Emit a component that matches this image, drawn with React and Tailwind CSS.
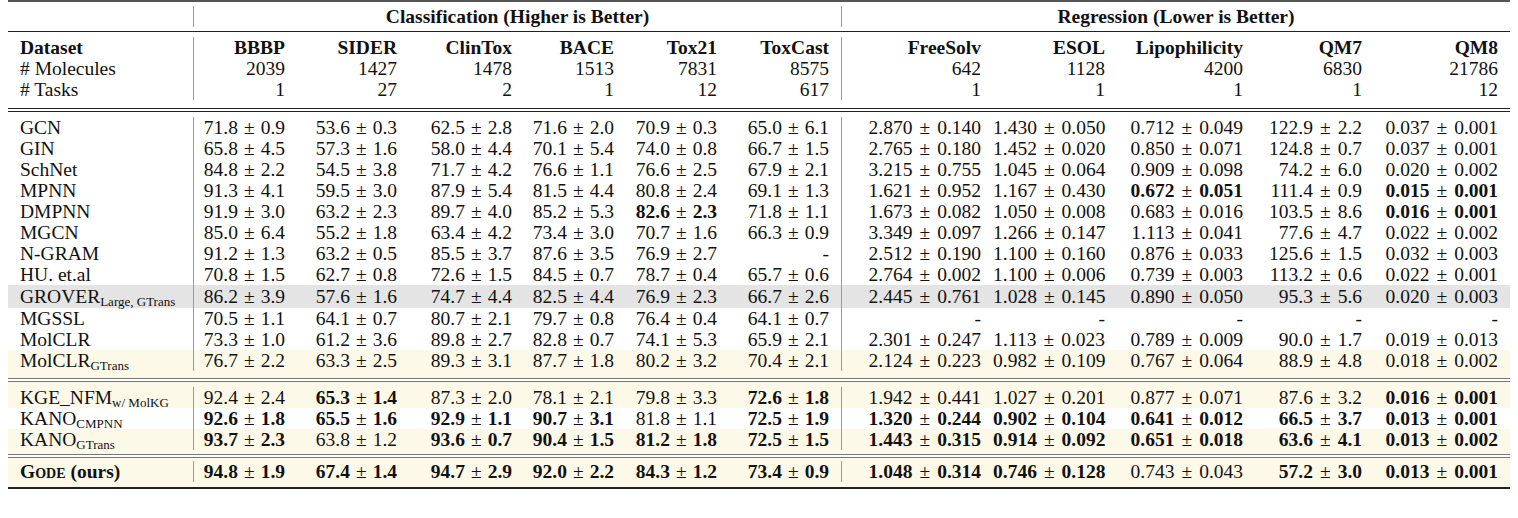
import React from 'react';

const grid = 'grid grid-cols-[185px_104px_112px_115px_102px_103px_112px_152px_124px_138px_119px_136px]';

const rows = [
  { name: 'GCN', c: ['71.8 ± 0.9', '53.6 ± 0.3', '62.5 ± 2.8', '71.6 ± 2.0', '70.9 ± 0.3', '65.0 ± 6.1'], r: ['2.870 ± 0.140', '1.430 ± 0.050', '0.712 ± 0.049', '122.9 ± 2.2', '0.037 ± 0.001'] },
  { name: 'GIN', c: ['65.8 ± 4.5', '57.3 ± 1.6', '58.0 ± 4.4', '70.1 ± 5.4', '74.0 ± 0.8', '66.7 ± 1.5'], r: ['2.765 ± 0.180', '1.452 ± 0.020', '0.850 ± 0.071', '124.8 ± 0.7', '0.037 ± 0.001'] },
  { name: 'SchNet', c: ['84.8 ± 2.2', '54.5 ± 3.8', '71.7 ± 4.2', '76.6 ± 1.1', '76.6 ± 2.5', '67.9 ± 2.1'], r: ['3.215 ± 0.755', '1.045 ± 0.064', '0.909 ± 0.098', '74.2 ± 6.0', '0.020 ± 0.002'] },
  { name: 'MPNN', c: ['91.3 ± 4.1', '59.5 ± 3.0', '87.9 ± 5.4', '81.5 ± 4.4', '80.8 ± 2.4', '69.1 ± 1.3'], r: ['1.621 ± 0.952', '1.167 ± 0.430', '*0.672 ± 0.051', '111.4 ± 0.9', '*0.015 ± 0.001'] },
  { name: 'DMPNN', c: ['91.9 ± 3.0', '63.2 ± 2.3', '89.7 ± 4.0', '85.2 ± 5.3', '*82.6 ± 2.3', '71.8 ± 1.1'], r: ['1.673 ± 0.082', '1.050 ± 0.008', '0.683 ± 0.016', '103.5 ± 8.6', '*0.016 ± 0.001'] },
  { name: 'MGCN', c: ['85.0 ± 6.4', '55.2 ± 1.8', '63.4 ± 4.2', '73.4 ± 3.0', '70.7 ± 1.6', '66.3 ± 0.9'], r: ['3.349 ± 0.097', '1.266 ± 0.147', '1.113 ± 0.041', '77.6 ± 4.7', '0.022 ± 0.002'] },
  { name: 'N-GRAM', c: ['91.2 ± 1.3', '63.2 ± 0.5', '85.5 ± 3.7', '87.6 ± 3.5', '76.9 ± 2.7', '-'], r: ['2.512 ± 0.190', '1.100 ± 0.160', '0.876 ± 0.033', '125.6 ± 1.5', '0.032 ± 0.003'] },
  { name: 'HU. et.al', c: ['70.8 ± 1.5', '62.7 ± 0.8', '72.6 ± 1.5', '84.5 ± 0.7', '78.7 ± 0.4', '65.7 ± 0.6'], r: ['2.764 ± 0.002', '1.100 ± 0.006', '0.739 ± 0.003', '113.2 ± 0.6', '0.022 ± 0.001'] },
  { name: 'GROVER', sub: 'Large, GTrans', tall: true, bg: 'bg-[#e4e4e4]', c: ['86.2 ± 3.9', '57.6 ± 1.6', '74.7 ± 4.4', '82.5 ± 4.4', '76.9 ± 2.3', '66.7 ± 2.6'], r: ['2.445 ± 0.761', '1.028 ± 0.145', '0.890 ± 0.050', '95.3 ± 5.6', '0.020 ± 0.003'] },
  { name: 'MGSSL', c: ['70.5 ± 1.1', '64.1 ± 0.7', '80.7 ± 2.1', '79.7 ± 0.8', '76.4 ± 0.4', '64.1 ± 0.7'], r: ['-', '-', '-', '-', '-'] },
  { name: 'MolCLR', c: ['73.3 ± 1.0', '61.2 ± 3.6', '89.8 ± 2.7', '82.8 ± 0.7', '74.1 ± 5.3', '65.9 ± 2.1'], r: ['2.301 ± 0.247', '1.113 ± 0.023', '0.789 ± 0.009', '90.0 ± 1.7', '0.019 ± 0.013'] },
  { name: 'MolCLR', sub: 'GTrans', bg: 'bg-[#fdf9e9]', c: ['76.7 ± 2.2', '63.3 ± 2.5', '89.3 ± 3.1', '87.7 ± 1.8', '80.2 ± 3.2', '70.4 ± 2.1'], r: ['2.124 ± 0.223', '0.982 ± 0.109', '0.767 ± 0.064', '88.9 ± 4.8', '0.018 ± 0.002'] },
];

const kgRows = [
  { name: 'KGE_NFM', sub: 'w/ MolKG', bg: 'bg-[#fdf9e9]', c: ['92.4 ± 2.4', '*65.3 ± 1.4', '87.3 ± 2.0', '78.1 ± 2.1', '79.8 ± 3.3', '*72.6 ± 1.8'], r: ['1.942 ± 0.441', '1.027 ± 0.201', '0.877 ± 0.071', '87.6 ± 3.2', '*0.016 ± 0.001'] },
  { name: 'KANO', sub: 'CMPNN', c: ['*92.6 ± 1.8', '*65.5 ± 1.6', '*92.9 ± 1.1', '*90.7 ± 3.1', '81.8 ± 1.1', '*72.5 ± 1.9'], r: ['*1.320 ± 0.244', '*0.902 ± 0.104', '*0.641 ± 0.012', '*66.5 ± 3.7', '*0.013 ± 0.001'] },
  { name: 'KANO', sub: 'GTrans', bg: 'bg-[#fdf9e9]', c: ['*93.7 ± 2.3', '63.8 ± 1.2', '*93.6 ± 0.7', '*90.4 ± 1.5', '*81.2 ± 1.8', '*72.5 ± 1.5'], r: ['*1.443 ± 0.315', '*0.914 ± 0.092', '*0.651 ± 0.018', '*63.6 ± 4.1', '*0.013 ± 0.002'] },
];

const ours = {
  name: 'ours', bg: 'bg-[#fdf9e9]',
  c: ['*94.8 ± 1.9', '*67.4 ± 1.4', '*94.7 ± 2.9', '*92.0 ± 2.2', '*84.3 ± 1.2', '*73.4 ± 0.9'],
  r: ['*1.048 ± 0.314', '*0.746 ± 0.128', '0.743 ± 0.043', '*57.2 ± 3.0', '*0.013 ± 0.001'],
};

// one number cell, "*" in front means bold
const Num = ({ v, wide }) => {
  const bold = v.startsWith('*');
  const s = bold ? v.slice(1) : v;
  if (!s.includes('±')) return <span>{s}</span>;
  const [a, b] = s.split(' ± ');
  return (
    <span className="whitespace-nowrap">
      <span className={bold ? 'font-bold' : ''}>{a}</span>
      <span className={wide ? 'mx-[7px]' : 'mx-[6px]'}>±</span>
      <span className={bold ? 'font-bold' : ''}>{b}</span>
    </span>
  );
};

const Row = ({ row, top = '', bottom = '', label }) => {
  const edge = `${top} ${bottom}`;
  return (
    <div className={`${grid} ${row.bg || ''} ${row.tall ? 'leading-[23px]' : 'leading-[21px]'}`}>
      <div className={`pl-[12px] whitespace-nowrap ${edge}`}>
        {label || (
          <>
            {row.name}
            {row.sub && <sub className="text-[13px]">{row.sub}</sub>}
          </>
        )}
      </div>
      {row.c.map((v, i) => (
        <div key={i} className={`text-right pr-[12px] ${i === 0 ? 'border-l border-[#9a9a9a]' : ''} ${edge}`}>
          <Num v={v} />
        </div>
      ))}
      {row.r.map((v, i) => (
        <div key={i} className={`text-right pr-[12px] ${i === 0 ? 'border-l border-[#9a9a9a]' : ''} ${edge}`}>
          <Num v={v} wide />
        </div>
      ))}
    </div>
  );
};

const Rule = ({ double, color = 'bg-[#222]' }) =>
  double ? (
    <div className="flex flex-col gap-[2px]">
      <div className={`h-px ${color}`} />
      <div className={`h-px ${color}`} />
    </div>
  ) : (
    <div className={`h-px ${color}`} />
  );

const App = () => {
  const heads = ['BBBP', 'SIDER', 'ClinTox', 'BACE', 'Tox21', 'ToxCast', 'FreeSolv', 'ESOL', 'Lipophilicity', 'QM7', 'QM8'];
  const mols = ['2039', '1427', '1478', '1513', '7831', '8575', '642', '1128', '4200', '6830', '21786'];
  const tasks = ['1', '27', '2', '1', '12', '617', '1', '1', '1', '1', '12'];
  const sep = (i) => (i === 0 || i === 6 ? 'border-l border-[#9a9a9a]' : '');

  return (
    <div className="bg-white w-[1518px] h-[518px] font-['Liberation_Serif',serif] text-[19.5px] text-[#111]">
      <div className="ml-[8px] w-[1502px]">
        <div className="h-[2px] bg-[#555]" />

        {/* group header */}
        <div className={`${grid} h-[29px] leading-[21px] font-bold`}>
          <div />
          <div className="col-span-6 border-l border-[#9a9a9a] text-center mt-[4px] mb-[4px]">Classification (Higher is Better)</div>
          <div className="col-span-5 border-l border-[#9a9a9a] text-center mt-[4px] mb-[4px]">Regression (Lower is Better)</div>
        </div>
        <Rule />

        {/* dataset header */}
        <div className="leading-[21px]">
          {[
            { label: <span className="font-bold">Dataset</span>, vals: heads, bold: true },
            { label: '# Molecules', vals: mols },
            { label: '# Tasks', vals: tasks },
          ].map((r, ri) => (
            <div key={ri} className={grid}>
              <div className={`pl-[12px] ${ri === 0 ? 'mt-[5px]' : ''} ${ri === 2 ? 'mb-[8px]' : ''}`}>{r.label}</div>
              {r.vals.map((v, i) => (
                <div key={i} className={`text-right pr-[12px] ${sep(i)} ${r.bold ? 'font-bold' : ''} ${ri === 0 ? 'mt-[5px]' : ''} ${ri === 2 ? 'mb-[8px]' : ''}`}>
                  {v}
                </div>
              ))}
            </div>
          ))}
        </div>
        <Rule double />

        {rows.map((row, i) => (
          <Row key={i} row={row} top={i === 0 ? 'mt-[5px]' : ''} bottom={i === rows.length - 1 ? 'mb-[7px]' : ''} />
        ))}
        <Rule double color="bg-[#777]" />

        {kgRows.map((row, i) => (
          <Row key={i} row={row} top={i === 0 ? 'mt-[5px]' : ''} bottom={i === kgRows.length - 1 ? 'mb-[4px]' : ''} />
        ))}
        <Rule double color="bg-[#777]" />

        <Row
          row={ours}
          top="mt-[3px]"
          bottom="mb-[5px]"
          label={
            <span className="font-bold">
              <span className="[font-variant:small-caps]">Gode</span> (ours)
            </span>
          }
        />
        <div className="h-[2px] bg-[#222]" />
      </div>
    </div>
  );
};

export default App;
